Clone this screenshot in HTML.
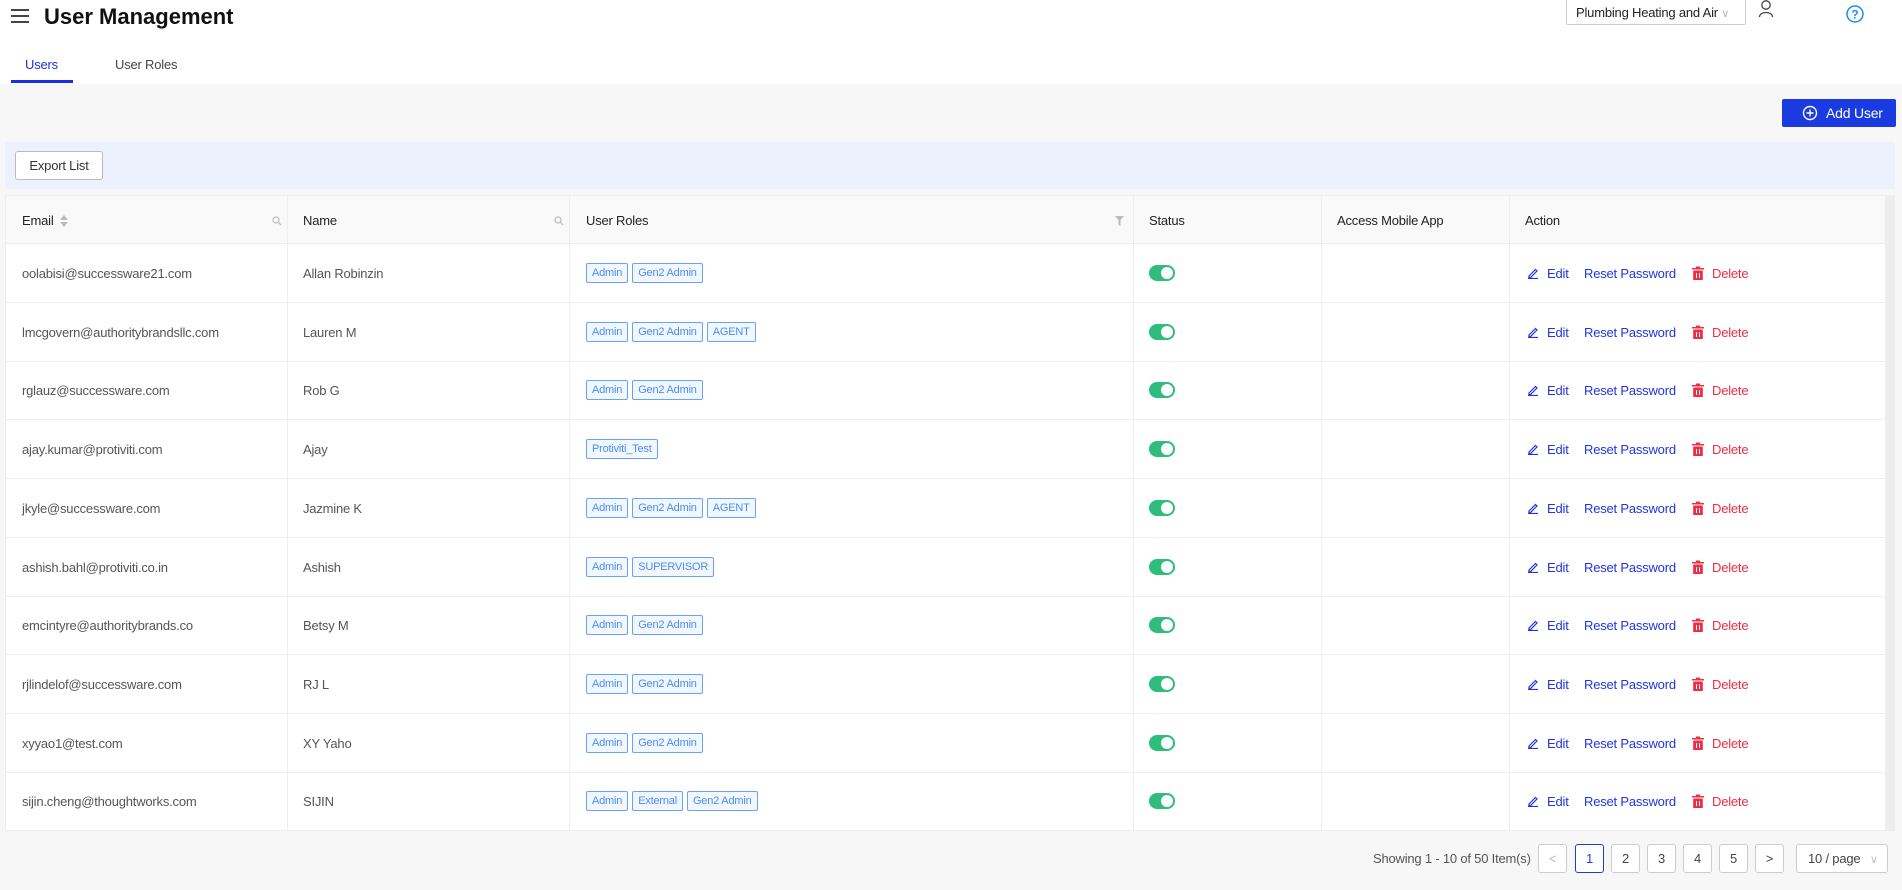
<!DOCTYPE html>
<html><head><meta charset="utf-8">
<style>
*{box-sizing:border-box;margin:0;padding:0}
body{width:1902px;height:890px;overflow:hidden;background:#f7f7f7;font-family:"Liberation Sans",sans-serif;font-size:13px;letter-spacing:-0.2px;color:#555;position:relative}
.hdr{position:absolute;left:0;top:0;width:1902px;height:84px;background:#fff}
.abs{position:absolute;white-space:nowrap}
.title{left:44px;top:4px;font-size:22px;font-weight:bold;color:#111;letter-spacing:0}
.tab{top:57px;font-size:13px}
.ul{left:11px;top:80px;width:62px;height:3px;background:#1a2ee6}
.dd{left:1566px;top:-1px;width:180px;height:26px;border:1px solid #ccc;border-radius:2px;color:#222;font-size:13px;padding:5px 0 0 9px;background:#fff}
.add{left:1782px;top:99px;width:114px;height:28px;background:#1b3be2;border-radius:2px;color:#fff;font-size:14px;padding:6px 0 0 44px}
.band{left:5px;top:142px;width:1890px;height:47px;background:#edf1fd;border-radius:2px}
.exp{left:15px;top:151px;width:88px;height:29px;border:1px solid #bbb;background:#fff;border-radius:3px;color:#333;font-size:13px;text-align:center;line-height:27px}
.tbl{left:5px;top:195px;width:1890px;height:636px;background:#fff;border:1px solid #eee}
.hrow{position:absolute;left:0;top:0;width:1880px;height:48px;background:#f9f9f9;border-bottom:1px solid #eee}
.vl{position:absolute;top:0;width:1px;height:634px;background:#eee}
.th{position:absolute;top:17px;color:#222;font-size:13px}
.row{position:absolute;left:0;width:1880px;height:59px;border-bottom:1px solid #eee}
.c{position:absolute;top:22px;font-size:13px;color:#555;white-space:nowrap}
.tag{display:inline-block;height:20px;border:1px solid #6aa3f0;background:#f1f7ff;color:#4b8df2;font-size:11px;line-height:18px;padding:0 5px;border-radius:2px;margin-right:4px}
.tags{position:absolute;left:580px;top:19px;white-space:nowrap}
.tg{position:absolute;left:1143px;top:21px;width:26px;height:16px;border-radius:8px;background:#2fbd7e}
.tg:after{content:"";position:absolute;right:2px;top:2px;width:12px;height:12px;border-radius:6px;background:#fff}
.blue{color:#2233e0}.red{color:#ef2c44}
.scroll{left:1885px;top:195px;width:10px;height:636px;background:#ededed}
.pg{top:844px;width:29px;height:29px;border:1px solid #ccc;border-radius:3px;background:#fff;text-align:center;line-height:27px;color:#444;font-size:13px}
</style></head><body>
<div class="hdr"></div>
<div class="abs" style="left:11px;top:7px;width:18px;height:16px">
<div style="height:2px;background:#444;margin-top:2px"></div><div style="height:2px;background:#444;margin-top:4px"></div><div style="height:2px;background:#444;margin-top:4px"></div></div>
<div class="abs title">User Management</div>
<div class="abs tab" style="left:25px;color:#1a2ee6">Users</div>
<div class="abs tab" style="left:115px;color:#444">User Roles</div>
<div class="abs ul"></div>
<div class="abs dd">Plumbing Heating and Air <span style="color:#bbb;font-size:11px">&#8744;</span></div>
<svg class="abs" style="left:1758px;top:0" width="16" height="18" viewBox="0 0 16 18"><circle cx="8" cy="5" r="4.2" fill="none" stroke="#444" stroke-width="1.3"/><path d="M1.5 17 C1.5 11 14.5 11 14.5 17" fill="none" stroke="#444" stroke-width="1.3"/></svg>
<svg class="abs" style="left:1846px;top:5px" width="18" height="18" viewBox="0 0 18 18"><circle cx="9" cy="9" r="8" fill="none" stroke="#1a8ef0" stroke-width="1.5"/><text x="9" y="13.5" font-size="12" font-family="Liberation Sans" text-anchor="middle" fill="#1a8ef0" font-weight="bold">?</text></svg>
<div class="abs add">Add User</div>
<svg class="abs" style="left:1802px;top:105px" width="16" height="16" viewBox="0 0 16 16"><circle cx="8" cy="8" r="6.5" fill="none" stroke="#fff" stroke-width="1.4"/><path d="M8 4.5v7M4.5 8h7" stroke="#fff" stroke-width="1.4"/></svg>
<div class="abs band"></div>
<div class="abs exp">Export List</div>
<div class="abs tbl">
<div class="hrow"></div>
<div class="th" style="left:16px">Email</div>
<svg style="position:absolute;left:54px;top:19px" width="8" height="12"><path d="M4 0L8 5H0Z M0 7H8L4 12Z" fill="#bbb"/></svg>
<svg style="position:absolute;left:266px;top:20px" width="10" height="10"><circle cx="4" cy="4" r="3" fill="none" stroke="#bbb" stroke-width="1.2"/><path d="M6 6l3 3" stroke="#bbb" stroke-width="1.2"/></svg>
<div class="th" style="left:297px">Name</div>
<svg style="position:absolute;left:548px;top:20px" width="10" height="10"><circle cx="4" cy="4" r="3" fill="none" stroke="#bbb" stroke-width="1.2"/><path d="M6 6l3 3" stroke="#bbb" stroke-width="1.2"/></svg>
<div class="th" style="left:580px">User Roles</div>
<svg style="position:absolute;left:1109px;top:20px" width="9" height="10"><path d="M0 0H9L5.5 4V10L3.5 9V4Z" fill="#bbb"/></svg>
<div class="th" style="left:1143px">Status</div>
<div class="th" style="left:1331px">Access Mobile App</div>
<div class="th" style="left:1519px">Action</div>
<div class="vl" style="left:281px"></div><div class="vl" style="left:563px"></div><div class="vl" style="left:1127px"></div><div class="vl" style="left:1315px"></div><div class="vl" style="left:1503px"></div>
<div id="rows"></div>
</div>
<div class="abs scroll"></div>
<div class="abs" style="left:1373px;top:851px;color:#555;font-size:13px">Showing 1 - 10 of 50 Item(s)</div>
<div class="abs pg" style="left:1538px;color:#bbb">&lt;</div>
<div class="abs pg" style="left:1575px;border-color:#1a3de0;color:#1a3de0">1</div>
<div class="abs pg" style="left:1611px">2</div>
<div class="abs pg" style="left:1647px">3</div>
<div class="abs pg" style="left:1683px">4</div>
<div class="abs pg" style="left:1719px">5</div>
<div class="abs pg" style="left:1755px">&gt;</div>
<div class="abs pg" style="left:1796px;width:92px;text-align:left;padding-left:11px">10 / page <span style="color:#bbb;font-size:11px;margin-left:6px">&#8744;</span></div>
<script>
var d=[["oolabisi@successware21.com","Allan Robinzin",["Admin","Gen2 Admin"]],
["lmcgovern@authoritybrandsllc.com","Lauren M",["Admin","Gen2 Admin","AGENT"]],
["rglauz@successware.com","Rob G",["Admin","Gen2 Admin"]],
["ajay.kumar@protiviti.com","Ajay",["Protiviti_Test"]],
["jkyle@successware.com","Jazmine K",["Admin","Gen2 Admin","AGENT"]],
["ashish.bahl@protiviti.co.in","Ashish",["Admin","SUPERVISOR"]],
["emcintyre@authoritybrands.co","Betsy M",["Admin","Gen2 Admin"]],
["rjlindelof@successware.com","RJ L",["Admin","Gen2 Admin"]],
["xyyao1@test.com","XY Yaho",["Admin","Gen2 Admin"]],
["sijin.cheng@thoughtworks.com","SIJIN",["Admin","External","Gen2 Admin"]]];
var h="";
d.forEach(function(r,i){var t=48+i*58.7;
h+='<div class="row" style="top:'+t+'px"><div class="c" style="left:16px">'+r[0]+'</div><div class="c" style="left:297px">'+r[1]+'</div><div class="tags">'+r[2].map(function(x){return '<span class="tag">'+x+'</span>'}).join('')+'</div><div class="tg"></div>'+
'<svg style="position:absolute;left:1521px;top:23px" width="12" height="12" viewBox="0 0 12 12"><path d="M2 9L8.5 2.5L10 4L3.5 10.5H2Z M1 11.5H11" fill="none" stroke="#2233e0" stroke-width="1.2"/></svg>'+
'<div class="c blue" style="left:1541px">Edit</div><div class="c blue" style="left:1578px">Reset Password</div>'+
'<svg style="position:absolute;left:1686px;top:22px" width="12" height="14" viewBox="0 0 12 14"><path d="M4 0.5H8V2H12V3.5H0V2H4Z" fill="#ef2c44"/><path d="M1.2 4.5H10.8V14H1.2Z" fill="#ef2c44"/><path d="M4.5 7V12M7.5 7V12" stroke="#fff" stroke-width="1"/></svg>'+
'<div class="c red" style="left:1706px">Delete</div></div>';});
document.getElementById("rows").innerHTML=h;
</script>
</body></html>
